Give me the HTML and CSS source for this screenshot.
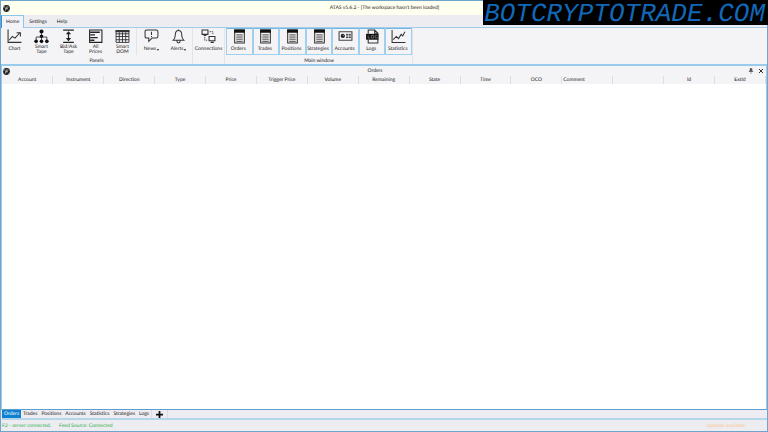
FILE: index.html
```
<!DOCTYPE html>
<html lang="en">
    <head>
        <meta charset="utf-8">
        <title>ATAS v5.6.2</title>
        <link rel="stylesheet" href="styles.css">
    </head>
    <body>
        <svg class="defs">
            <symbol id="logo" viewBox="0 0 14 14">
                <circle cx="7" cy="7" r="6.8" fill="#1c1c1c"/>
                <path d="M5 11l1.5-7H11M5 7.5h5" fill="none" stroke="#fff" stroke-width="1.3"/>
                <path d="M1 6l3-4M10 13l3-4" stroke="#eee" stroke-width="1"/>
            </symbol>
            <symbol id="list" viewBox="0 0 28 28">
                <path d="M5 2h18v24H5z" fill="#f4f4f4" stroke="#333" stroke-width="2"/>
                <path d="M4 1h20v6H4z" fill="#111"/>
                <path d="M8 11h12M8 15h12M8 19h12M8 23h12" stroke="#333" stroke-width="1.7"/>
            </symbol>
            <symbol id="chart" viewBox="0 0 28 28">
                <path d="M2 1v24h25M4 21l6-7 5 3 9-10M18 7h7v7" fill="none" stroke="#333" stroke-width="2"/>
            </symbol>
            <symbol id="tree" viewBox="0 0 28 28">
                <path d="M14 5v17M4 22v-7h20v7" fill="none" stroke="#222" stroke-width="1.5"/>
                <circle cx="14" cy="4.500" r="3.8" fill="#111"/>
                <path d="M11 11h6v5h-6z" fill="#111"/>
                <circle cx="4" cy="23" r="3.4" fill="#111"/>
                <circle cx="14" cy="23" r="3.4" fill="#111"/>
                <circle cx="24" cy="23" r="3.4" fill="#111"/>
            </symbol>
            <symbol id="spread" viewBox="0 0 28 28">
                <path d="M4 2h20M4 25h20M14 6v16" stroke="#222" stroke-width="2.2"/>
                <path d="M9 10l5-6 5 6zM9 17l5 6 5-6z" fill="#222"/>
            </symbol>
            <symbol id="prices" viewBox="0 0 28 28">
                <path d="M3 2h23v23H3z" fill="none" stroke="#222" stroke-width="2"/>
                <path d="M4 6h18M4 11h9M4 16h14M4 21h8" stroke="#222" stroke-width="2.6"/>
            </symbol>
            <symbol id="dom" viewBox="0 0 28 28">
                <path d="M2 3h24v22H2zM2 9h24M2 14h24M2 20h24M8 6v19M14 6v19M20 6v19" fill="none" stroke="#333" stroke-width="1.7"/>
                <path d="M1 2h26v4H1z" fill="#333"/>
            </symbol>
            <symbol id="news" viewBox="0 0 28 28">
                <path d="M5 2h18q3 0 3 3v9q0 3-3 3h-8l-6 6v-6H5q-3 0-3-3V5q0-3 3-3zM14 5v6M14 13v2" fill="none" stroke="#333" stroke-width="1.9"/>
            </symbol>
            <symbol id="bell" viewBox="0 0 28 28">
                <path d="M14 1v2M4 21q4-4 4-10 0-8 6-8t6 8q0 6 4 10zM11 22q0 4 3 4t3-4" fill="none" stroke="#333" stroke-width="1.9"/>
            </symbol>
            <symbol id="link" viewBox="0 0 28 28">
                <path d="M2 2h11v8H2zM15 14h11v8H15zM5 12h5M18 25h6" fill="none" stroke="#333" stroke-width="2"/>
                <path d="M16 5h6v6M7 15v6h6" fill="none" stroke="#333" stroke-width="1.6" stroke-dasharray="2.5 1.5"/>
            </symbol>
            <symbol id="card" viewBox="0 0 28 28">
                <path d="M2 5h24v16H2z" fill="none" stroke="#444" stroke-width="2"/>
                <circle cx="9" cy="13" r="4" fill="#222"/>
                <path d="M9 13l3-3" stroke="#fff"/>
                <path d="M15 10h4M20 10h4M15 13h4M20 13h4M15 16h4M20 16h4" stroke="#222" stroke-width="1.7"/>
            </symbol>
            <symbol id="log" viewBox="0 0 28 28">
                <path d="M6 9V2h12l6 6v18H6v-6M18 2v6h6" fill="none" stroke="#333" stroke-width="2"/>
                <path d="M2 9h23v11H2z" fill="#111"/>
                <path d="M6 12v5h4M12 12h4v5h-4zM23 12h-4v5h4v-2" fill="none" stroke="#888" stroke-width="1.2"/>
            </symbol>
            <symbol id="stats" viewBox="0 0 28 28">
                <path d="M2 2v23h25M4 20l6-6 4 4 5-8 3 3 4-8" fill="none" stroke="#333" stroke-width="1.9"/>
            </symbol>
        </svg>

        <div class="window">
            <header class="titlebar">
                <svg class="logo"><use href="#logo"/></svg>
                <h1>ATAS v5.6.2 - [The workspace hasn't been loaded]</h1>
            </header>
            <div class="banner">BOTCRYPTOTRADE.COM</div>

            <nav class="menu">
                <button class="menu-tab active">Home</button>
                <button class="menu-tab">Settings</button>
                <button class="menu-tab">Help</button>
            </nav>

            <div class="ribbon">
                <section class="group panels">
                    <div class="tools">
                        <div class="tool-set five">
                            <button class="tool"><svg><use href="#chart"/></svg><span>Chart</span></button>
                            <button class="tool"><svg><use href="#tree"/></svg><span>Smart<br>Tape</span></button>
                            <button class="tool"><svg><use href="#spread"/></svg><span>Bid/Ask<br>Tape</span></button>
                            <button class="tool"><svg><use href="#prices"/></svg><span>All<br>Prices</span></button>
                            <button class="tool"><svg><use href="#dom"/></svg><span>Smart<br>DOM</span></button>
                        </div>
                        <div class="tool-set two">
                            <button class="tool"><svg><use href="#news"/></svg><span class="drop">News</span></button>
                            <button class="tool"><svg><use href="#bell"/></svg><span class="drop">Alerts</span></button>
                        </div>
                    </div>
                    <h2>Panels</h2>
                </section>
                <section class="group connections">
                    <div class="tools">
                        <button class="tool"><svg><use href="#link"/></svg><span>Connections</span></button>
                    </div>
                </section>
                <section class="group main">
                    <div class="tools">
                        <button class="tool on"><svg><use href="#list"/></svg><span>Orders</span></button>
                        <button class="tool on"><svg><use href="#list"/></svg><span>Trades</span></button>
                        <button class="tool on"><svg><use href="#list"/></svg><span>Positions</span></button>
                        <button class="tool on"><svg><use href="#list"/></svg><span>Strategies</span></button>
                        <button class="tool on"><svg><use href="#card"/></svg><span>Accounts</span></button>
                        <button class="tool on"><svg><use href="#log"/></svg><span>Logs</span></button>
                        <button class="tool on"><svg><use href="#stats"/></svg><span>Statistics</span></button>
                    </div>
                    <h2>Main window</h2>
                </section>
            </div>

            <main class="dock">
                <div class="dock-title">
                    <svg class="logo"><use href="#logo"/></svg>
                    <h2>Orders</h2>
                    <button class="dock-button" aria-label="Pin"><svg viewBox="0 0 12 12"><path d="M4 1h4v5H4zM2 6h8v1H2zM6 7v5" fill="#555" stroke="#555"/></svg></button>
                    <button class="dock-button" aria-label="Close"><svg viewBox="0 0 12 12"><path d="M2 2l8 8M10 2l-8 8" stroke="#333" stroke-width="2"/></svg></button>
                </div>
                <div class="sheet">
                    <table class="orders">
                        <thead>
                            <tr>
                                <th>Account</th>
                                <th>Instrument</th>
                                <th>Direction</th>
                                <th>Type</th>
                                <th>Price</th>
                                <th>Trigger Price</th>
                                <th>Volume</th>
                                <th>Remaining</th>
                                <th>State</th>
                                <th>Time</th>
                                <th>OCO</th>
                                <th class="left">Comment</th>
                                <th></th>
                                <th>Id</th>
                                <th>ExtId</th>
                            </tr>
                        </thead>
                    </table>
                </div>
            </main>

            <nav class="sheets">
                <button class="sheet-tab active">Orders</button>
                <button class="sheet-tab">Trades</button>
                <button class="sheet-tab">Positions</button>
                <button class="sheet-tab">Accounts</button>
                <button class="sheet-tab">Statistics</button>
                <button class="sheet-tab">Strategies</button>
                <button class="sheet-tab">Logs</button>
                <button class="sheet-tab add" aria-label="Add tab"><svg viewBox="0 0 14 14"><path d="M7 0v14M0 7h14" stroke="#111" stroke-width="3.5"/></svg></button>
            </nav>

            <footer class="status">
                <span>F2 - server connected.</span>
                <span>Feed Source: Connected</span>
                <a class="update" href="#">Updates available</a>
            </footer>
        </div>
    </body>
</html>
```
FILE: styles.css
```
* {
    box-sizing: border-box;
}
body {
    margin: 0;
    font-family: Lato, "Open Sans", sans-serif;
    font-size: 5px;
    line-height: 8px;
    text-rendering: geometricPrecision;
    color: #222;
}
button {
    padding: 0;
    border: none;
    background: none;
    font: inherit;
    text-rendering: inherit;
    color: inherit;
    cursor: pointer;
}
h1, h2 {
    margin: 0;
    font-size: 5px;
    font-weight: normal;
    text-align: center;
}
.defs {
    display: none;
}
.window {
    position: relative;
    display: flex;
    flex-direction: column;
    height: 100vh;
    border: 1px solid #6fa5cb;
    background-color: #ececf1;
}
.logo {
    width: 7px;
    height: 7px;
    flex: none;
}

/* title bar */
.titlebar {
    display: flex;
    align-items: center;
    height: 14px;
    padding: 0 2px;
    background-color: #fffff0;
}
.titlebar h1 {
    flex: 1;
    padding-right: 6px;
}
.banner {
    position: absolute;
    top: -1px;
    right: -1px;
    height: 25px;
    padding: 0 3px 0 1px;
    background-color: #000;
    color: #1268b8;
    font-family: "Liberation Mono", monospace;
    font-style: italic;
    font-size: 26px;
    line-height: 28px;
}

/* ribbon */
.menu {
    display: flex;
    height: 12px;
}
.menu-tab {
    padding: 1px 5px 0;
}
.menu-tab.active {
    z-index: 1;
    margin-bottom: -1px;
    padding: 0 4px;
    border: 1px solid #8dc6ec;
    border-left-color: #2f93d6;
    border-bottom: none;
    background-color: #f4f4f8;
}
.ribbon {
    display: flex;
    height: 39px;
    border-top: 1px solid #a5cde8;
    border-bottom: 2px solid #9bcbea;
    background-color: #f4f4f7;
}
.group {
    display: flex;
    flex-direction: column;
    border-right: 1px solid #dfe3ea;
}
.group h2 {
    padding-top: 2px;
}
.panels {
    width: 192px;
}
.connections {
    width: 32px;
}
.main {
    width: 188px;
    padding-left: 1px;
}
.tools {
    display: flex;
    height: 27px;
}
.tool-set {
    display: flex;
}
.tool-set.five {
    flex: 5;
    border-right: 1px solid #dfe3ea;
}
.tool-set.two {
    flex: 2;
    padding-left: 1px;
}
.tool {
    display: flex;
    flex: 1;
    flex-direction: column;
    align-items: center;
    min-width: 0;
    border: 1px solid transparent;
}
.tool svg {
    width: 15px;
    height: 15px;
    flex: none;
}
.tool span {
    display: flex;
    align-items: center;
    height: 12px;
    padding-top: 1px;
    line-height: 5px;
    white-space: nowrap;
}
.tool.on {
    border-color: #9fd0ef;
    border-top-color: #6eb7e6;
}
.tool.on span {
    padding-right: 2px;
}
.drop::after {
    content: "";
    margin-left: 1px;
    border: 1px solid transparent;
    border-top: 2px solid #222;
    border-bottom: none;
}

/* docked panel */
.dock {
    display: flex;
    flex: 1;
    flex-direction: column;
    border-right: 1px solid #9bcbea;
    border-left: 1px solid #9bcbea;
    border-bottom: 1px solid #5a9fd0;
    background-color: #fff;
}
.dock-title {
    display: flex;
    align-items: center;
    gap: 4px;
    height: 10px;
    padding: 0 2px 0 1px;
    background-color: #f4f4f7;
}
.dock-title h2 {
    flex: 1;
    padding-right: 8px;
}
.dock-button svg {
    display: block;
    width: 6px;
    height: 6px;
}
.orders {
    width: 100%;
    table-layout: fixed;
    border-collapse: collapse;
    background-color: #f4f4f7;
}
.orders th {
    height: 8px;
    padding: 0;
    border-right: 1px solid #dcdde2;
    font-weight: normal;
    text-align: center;
}
.orders th.left {
    padding-left: 1px;
    text-align: left;
}

/* bottom tabs and status line */
.sheets {
    display: flex;
    height: 10px;
    border-bottom: 2px solid #b5d5ea;
    margin-left: 1px;
}
.sheet-tab {
    padding: 0 2px;
}
.sheet-tab.active {
    background-color: #0f7fd0;
    color: #fff;
}
.sheet-tab.add {
    padding: 0 4px;
    border-right: 1px solid #dcdde2;
    border-left: 1px solid #dcdde2;
}
.add svg {
    display: block;
    width: 7px;
    height: 7px;
}
.status {
    display: flex;
    align-items: center;
    gap: 8px;
    height: 11px;
    padding: 1px 22px 0 1px;
    color: #2fae4c;
}
.update {
    margin-left: auto;
    color: #f7c98a;
    text-decoration: none;
}
```
